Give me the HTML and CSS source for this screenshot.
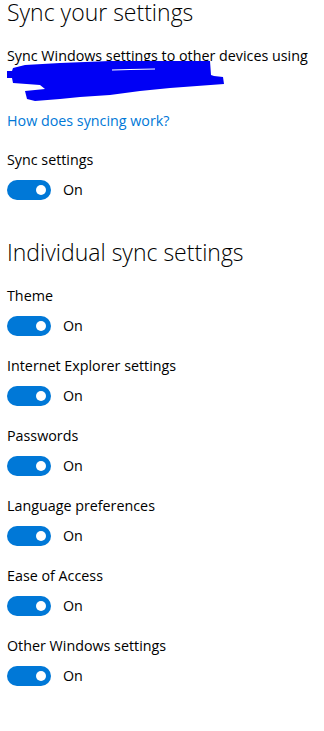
FILE: index.html
```html
<!DOCTYPE html>
<html lang="en">
<head>
    <meta charset="UTF-8">
    <title>Sync your settings</title>
    <link rel="stylesheet" href="styles.css">
</head>
<body>
    <div class="page">
        <h1>Sync your settings</h1>

        <div class="account">
            <p class="account-text">Sync Windows settings to other devices using</p>
            <div class="account-line"></div>
            <!-- redacted e-mail address -->
            <svg class="scribble" width="230" height="42" viewBox="0 0 230 42">
                <polygon fill="#0000f5" points="13,8 25,5 60,3 110,1 210,1 211,15 214,16 223,17 224,24 170,28 140,31 110,35 80,37 60,39 35,41 27,39 25,31 45,29 40,25 13,23 12,18 7,18 7,11 12,11"/>
                <polyline fill="none" stroke="#ffffff" stroke-width="1.2" points="112,10 130,9.5 155,9"/>
            </svg>
        </div>

        <a class="help-link" href="#">How does syncing work?</a>

        <div class="setting">
            <div class="setting-label">Sync settings</div>
            <div class="toggle-row">
                <span class="toggle"><span class="knob"></span></span>
                <span class="toggle-state">On</span>
            </div>
        </div>

        <h2>Individual sync settings</h2>

        <div class="setting">
            <div class="setting-label">Theme</div>
            <div class="toggle-row">
                <span class="toggle"><span class="knob"></span></span>
                <span class="toggle-state">On</span>
            </div>
        </div>
        <div class="setting">
            <div class="setting-label">Internet Explorer settings</div>
            <div class="toggle-row">
                <span class="toggle"><span class="knob"></span></span>
                <span class="toggle-state">On</span>
            </div>
        </div>
        <div class="setting">
            <div class="setting-label">Passwords</div>
            <div class="toggle-row">
                <span class="toggle"><span class="knob"></span></span>
                <span class="toggle-state">On</span>
            </div>
        </div>
        <div class="setting">
            <div class="setting-label">Language preferences</div>
            <div class="toggle-row">
                <span class="toggle"><span class="knob"></span></span>
                <span class="toggle-state">On</span>
            </div>
        </div>
        <div class="setting">
            <div class="setting-label">Ease of Access</div>
            <div class="toggle-row">
                <span class="toggle"><span class="knob"></span></span>
                <span class="toggle-state">On</span>
            </div>
        </div>
        <div class="setting">
            <div class="setting-label">Other Windows settings</div>
            <div class="toggle-row">
                <span class="toggle"><span class="knob"></span></span>
                <span class="toggle-state">On</span>
            </div>
        </div>
    </div>
</body>
</html>
```

FILE: styles.css
```css
* {
    margin: 0;
    padding: 0;
    box-sizing: border-box;
}

body {
    background: #ffffff;
    color: #000000;
    font-family: 'Open Sans', 'Noto Sans', sans-serif;
    font-size: 14.3px;
    line-height: 20px;
}

.page {
    padding: 0 7px;
}

h1,
h2 {
    font-size: 23px;
    line-height: 24px;
    font-weight: 300;
    color: #000000;
}

h1 {
    padding-top: 1px;
    line-height: 23px;
}

h2 {
    margin-top: 40px;
    margin-bottom: 2px;
}

.account {
    position: relative;
    margin-top: 22px;
}

.account-text {
    white-space: nowrap;
}

.account-line {
    height: 20px;
}

.scribble {
    position: absolute;
    left: -7px;
    top: 14px;
}

.help-link {
    display: block;
    margin-top: 25px;
    color: #0078d7;
    text-decoration: none;
    white-space: nowrap;
}

.setting {
    padding-top: 19px;
}

h2 + .setting {
    padding-top: 20px;
}

.setting + .setting {
    padding-top: 20px;
}

.setting-label {
    white-space: nowrap;
}

.toggle-row {
    display: flex;
    align-items: center;
    gap: 12px;
    margin-top: 10px;
    height: 20px;
}

.toggle {
    display: flex;
    align-items: center;
    justify-content: flex-end;
    width: 44px;
    height: 20px;
    padding-right: 5px;
    border-radius: 10px;
    background: #0078d7;
}

.knob {
    width: 10px;
    height: 10px;
    border-radius: 50%;
    background: #ffffff;
}
```
